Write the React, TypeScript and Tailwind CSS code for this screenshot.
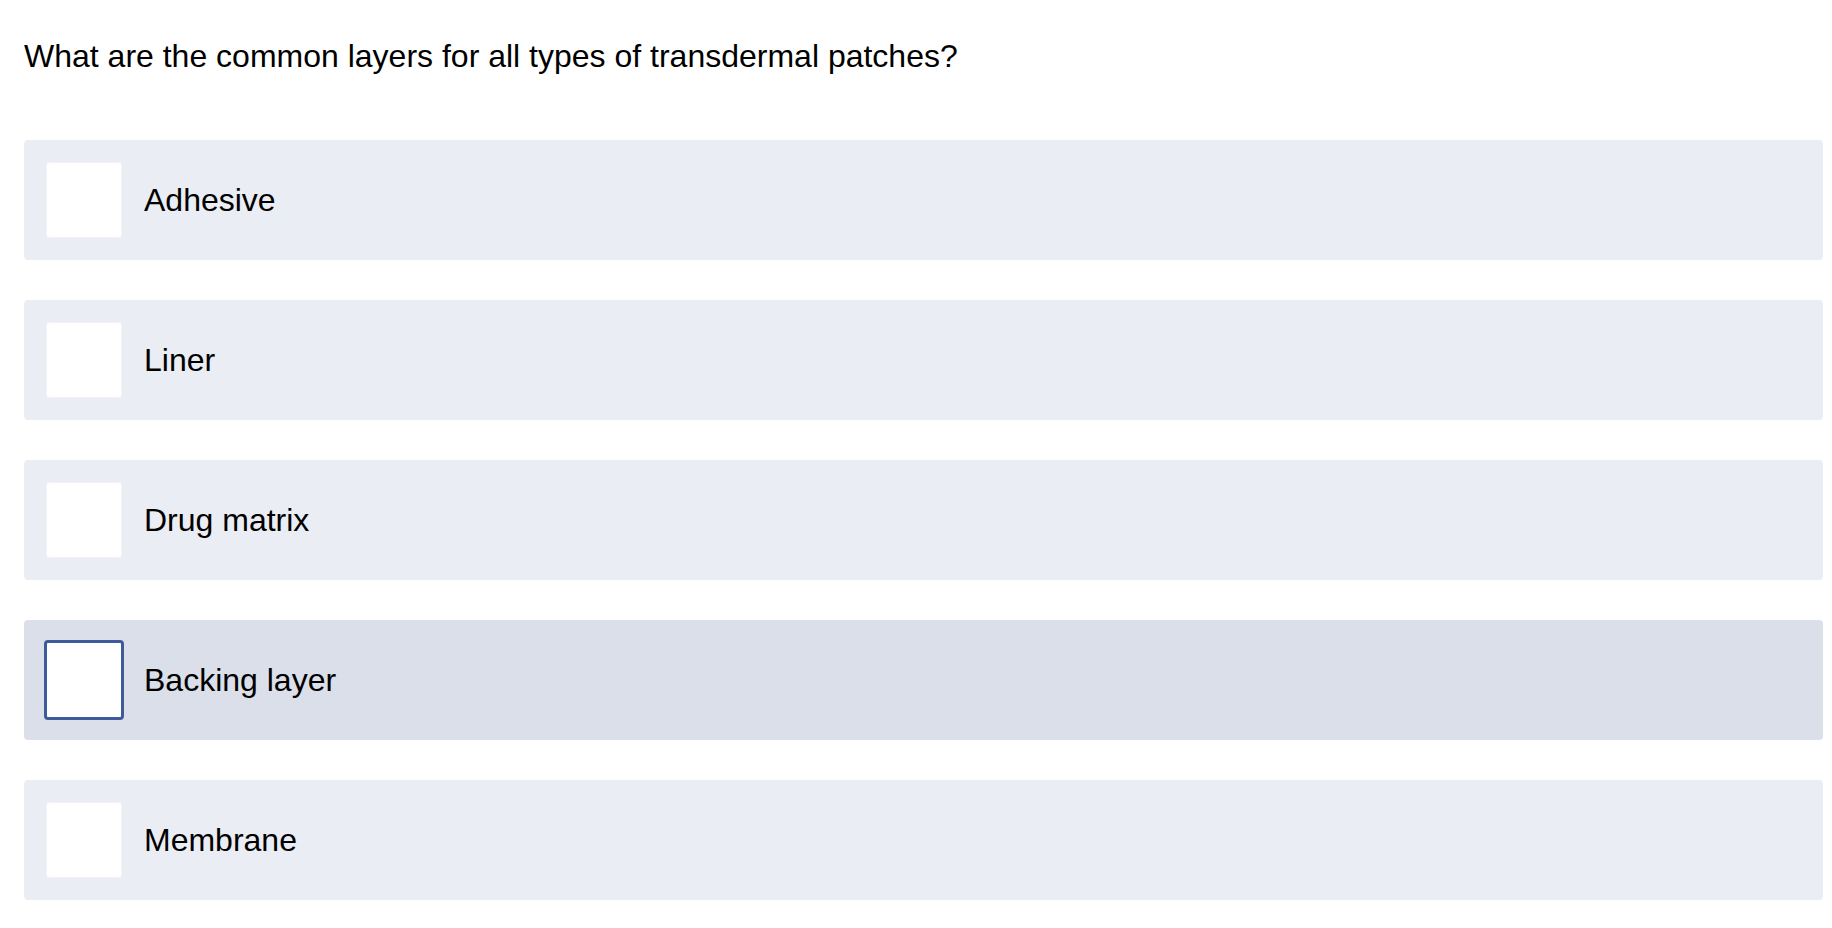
const options = ["Adhesive", "Liner", "Drug matrix", "Backing layer", "Membrane"];

export default function App() {
  return (
    <div className="min-h-screen bg-white pt-[38px] pl-[24px] pr-[9px] text-black font-['Liberation_Sans',Arial,sans-serif]">
      <h1 className="text-[32px] leading-[37px] font-normal">
        What are the common layers for all types of transdermal patches?
      </h1>
      <div className="mt-[65px] flex flex-col gap-[40px]">
        {options.map((label) => {
          const focused = label === "Backing layer";
          return (
            <label
              key={label}
              className={
                focused
                  ? "flex h-[120px] items-center gap-[22px] rounded-[4px] bg-[#dadfe9] px-[22px]"
                  : "flex h-[120px] items-center gap-[22px] rounded-[4px] bg-[#eaedf3] px-[22px]"
              }
            >
              <span
                className={
                  focused
                    ? "box-border h-[80px] w-[80px] -mx-[2px] shrink-0 rounded-[4px] border-[3px] border-[#3f5a9b] bg-white"
                    : "box-border h-[76px] w-[76px] shrink-0 rounded-[3px] border border-[#f1f3f7] bg-white"
                }
              />
              <span className="text-[32px] leading-[37px]">{label}</span>
            </label>
          );
        })}
      </div>
    </div>
  );
}
